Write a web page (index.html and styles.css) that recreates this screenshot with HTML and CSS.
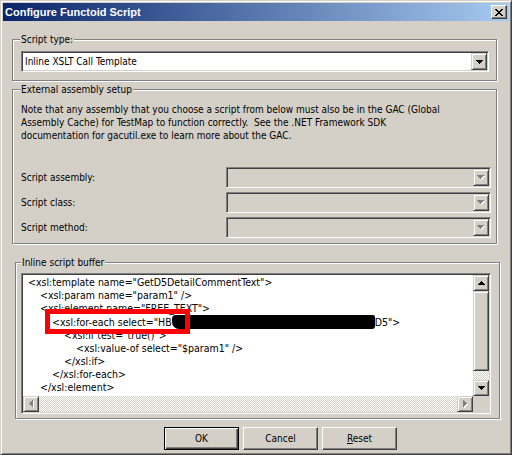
FILE: index.html
```html
<!DOCTYPE html>
<html lang="en">
<head>
  <meta charset="UTF-8" />
  <title>Configure Functoid Script</title>
  <link rel="stylesheet" href="styles.css">
</head>
<body>
  <div class="window">
    <div class="titlebar">
      <span class="title">Configure Functoid Script</span>
      <button class="close" aria-label="Close">
        <svg width="8" height="7" viewBox="0 0 8 7" shape-rendering="crispEdges"><path d="M0 0h2v1H0zM6 0h2v1H6zM1 1h2v1H1zM5 1h2v1H5zM2 2h4v1H2zM3 3h2v1H3zM2 4h4v1H2zM1 5h2v1H1zM5 5h2v1H5zM0 6h2v1H0zM6 6h2v1H6z"/></svg>
      </button>
    </div>

    <div class="client">
      <fieldset class="group group-type">
        <legend>Script type:</legend>
        <div class="combo">
          <span class="combo-text">Inline XSLT Call Template</span>
          <span class="sbtn combo-btn">
            <svg width="7" height="4" viewBox="0 0 7 4" shape-rendering="crispEdges"><path d="M0 0h7v1H0zM1 1h5v1H1zM2 2h3v1H2zM3 3h1v1H3z"/></svg>
          </span>
        </div>
      </fieldset>

      <fieldset class="group group-assembly">
        <legend>External assembly setup</legend>
        <p class="note">Note that any assembly that you choose a script from below must also be in the GAC (Global<br>Assembly Cache) for TestMap to function correctly.&nbsp; See the .NET Framework SDK<br>documentation for gacutil.exe to learn more about the GAC.</p>
        <div class="fields">
          <div class="field-row">
            <label>Script assembly:</label>
            <div class="combo is-disabled">
              <span class="combo-text"></span>
              <span class="sbtn combo-btn">
                <svg width="8" height="5" viewBox="0 0 8 5" shape-rendering="crispEdges"><path fill="#fff" transform="translate(1 1)" d="M0 0h7v1H0zM1 1h5v1H1zM2 2h3v1H2zM3 3h1v1H3z"/><path fill="#808080" d="M0 0h7v1H0zM1 1h5v1H1zM2 2h3v1H2zM3 3h1v1H3z"/></svg>
              </span>
            </div>
          </div>
          <div class="field-row">
            <label>Script class:</label>
            <div class="combo is-disabled">
              <span class="combo-text"></span>
              <span class="sbtn combo-btn">
                <svg width="8" height="5" viewBox="0 0 8 5" shape-rendering="crispEdges"><path fill="#fff" transform="translate(1 1)" d="M0 0h7v1H0zM1 1h5v1H1zM2 2h3v1H2zM3 3h1v1H3z"/><path fill="#808080" d="M0 0h7v1H0zM1 1h5v1H1zM2 2h3v1H2zM3 3h1v1H3z"/></svg>
              </span>
            </div>
          </div>
          <div class="field-row">
            <label>Script method:</label>
            <div class="combo is-disabled">
              <span class="combo-text"></span>
              <span class="sbtn combo-btn">
                <svg width="8" height="5" viewBox="0 0 8 5" shape-rendering="crispEdges"><path fill="#fff" transform="translate(1 1)" d="M0 0h7v1H0zM1 1h5v1H1zM2 2h3v1H2zM3 3h1v1H3z"/><path fill="#808080" d="M0 0h7v1H0zM1 1h5v1H1zM2 2h3v1H2zM3 3h1v1H3z"/></svg>
              </span>
            </div>
          </div>
        </div>
      </fieldset>

      <fieldset class="group group-buffer">
        <legend>Inline script buffer</legend>
        <div class="editor">
          <div class="code">
            <div class="line">&lt;xsl:template name="GetD5DetailCommentText"&gt;</div>
            <div class="line in-1">&lt;xsl:param name="param1" /&gt;</div>
            <div class="line in-1">&lt;xsl:element name="FREE_TEXT"&gt;</div>
            <div class="line in-2">&lt;xsl:for-each select="HB<span class="redacted"></span>D5"&gt;</div>
            <div class="line in-3">&lt;xsl:if test="true()"&gt;</div>
            <div class="line in-4">&lt;xsl:value-of select="$param1" /&gt;</div>
            <div class="line in-3">&lt;/xsl:if&gt;</div>
            <div class="line in-2">&lt;/xsl:for-each&gt;</div>
            <div class="line in-1">&lt;/xsl:element&gt;</div>
            <div class="highlight"></div>
          </div>
          <div class="vscroll">
            <span class="sbtn">
              <svg width="7" height="4" viewBox="0 0 7 4" shape-rendering="crispEdges"><path d="M3 0h1v1H3zM2 1h3v1H2zM1 2h5v1H1zM0 3h7v1H0z"/></svg>
            </span>
            <span class="sbtn thumb"></span>
            <span class="track"></span>
            <span class="sbtn">
              <svg width="7" height="4" viewBox="0 0 7 4" shape-rendering="crispEdges"><path d="M0 0h7v1H0zM1 1h5v1H1zM2 2h3v1H2zM3 3h1v1H3z"/></svg>
            </span>
          </div>
          <div class="hscroll">
            <span class="sbtn">
              <svg width="5" height="8" viewBox="0 0 5 8" shape-rendering="crispEdges"><path fill="#fff" transform="translate(1 1)" d="M3 0h1v7H3zM2 1h1v5H2zM1 2h1v3H1zM0 3h1v1H0z"/><path fill="#808080" d="M3 0h1v7H3zM2 1h1v5H2zM1 2h1v3H1zM0 3h1v1H0z"/></svg>
            </span>
            <span class="track"></span>
            <span class="sbtn">
              <svg width="5" height="8" viewBox="0 0 5 8" shape-rendering="crispEdges"><path fill="#fff" transform="translate(1 1)" d="M0 0h1v7H0zM1 1h1v5H1zM2 2h1v3H2zM3 3h1v1H3z"/><path fill="#808080" d="M0 0h1v7H0zM1 1h1v5H1zM2 2h1v3H2zM3 3h1v1H3z"/></svg>
            </span>
          </div>
          <div class="corner"></div>
        </div>
      </fieldset>

      <div class="buttons">
        <button class="btn is-default">OK</button>
        <button class="btn">Cancel</button>
        <button class="btn"><u>R</u>eset</button>
      </div>
    </div>
  </div>
</body>
</html>
```

FILE: styles.css
```css
:root {
  --face: #d4d0c8;
  --shadow: #808080;
  --dark: #404040;
  --light: #fff;
}

* {
  box-sizing: border-box;
}

body {
  margin: 0;
  background: var(--face);
  font-family: "DejaVu Sans Condensed", "DejaVu Sans", "Liberation Sans", sans-serif;
  font-stretch: condensed;
  font-size: 10px;
  color: #000;
}

.window {
  width: 512px;
  height: 455px;
  overflow: hidden;
  display: flex;
  flex-direction: column;
  padding: 2px;
  background: var(--face);
  border: 1px solid;
  border-color: var(--face) var(--dark) var(--dark) var(--face);
  box-shadow: inset 1px 1px var(--light), inset -1px -1px var(--shadow);
}

/* Title bar */
.titlebar {
  height: 18px;
  display: flex;
  align-items: center;
  justify-content: space-between;
  padding: 0 2px;
  background: linear-gradient(to right, #0a246a, #a6caf0);
}

.title {
  color: #fff;
  font-family: "Liberation Sans", Arial, sans-serif;
  font-stretch: normal;
  font-size: 11px;
  font-weight: bold;
  line-height: 13px;
}

.close {
  width: 16px;
  height: 14px;
  padding: 0;
  display: flex;
  align-items: center;
  justify-content: center;
  background: var(--face);
  border: 1px solid;
  border-color: var(--light) var(--dark) var(--dark) var(--light);
  box-shadow: inset -1px -1px var(--shadow);
}

.client {
  flex: 1;
}

/* Group boxes */
.group {
  width: 485px;
  min-width: 0;
  border: 1px solid var(--shadow);
  box-shadow: inset 1px 1px var(--light), 1px 1px var(--light);
}

.group legend {
  padding: 0 1px;
  margin-left: -1px;
  line-height: 13px;
  background: var(--face);
}

.group-type {
  margin: 12px 0 0 9px;
  padding: 5px 7px 8px 8px;
}

.group-assembly {
  margin: 2px 0 0 9px;
  padding: 7px 5px 5px 8px;
}

.group-buffer {
  margin: 12px 0 0 12px;
  padding: 4px 8px 4px 5px;
}

.group-buffer legend {
  margin-left: 0;
}

.note {
  margin: 0;
  line-height: 13px;
  white-space: nowrap;
}

.fields {
  margin-top: 25px;
  display: flex;
  flex-direction: column;
  gap: 4px;
}

.field-row {
  height: 21px;
  display: flex;
  align-items: center;
  justify-content: space-between;
}

.field-row .combo {
  width: 265px;
}

/* Combo boxes */
.combo {
  height: 21px;
  display: flex;
  padding: 1px;
  background: #fff;
  border: 1px solid;
  border-color: var(--shadow) var(--light) var(--light) var(--shadow);
  box-shadow: inset 1px 1px var(--dark), inset -1px -1px var(--face);
}

.combo.is-disabled {
  background: var(--face);
}

.combo-text {
  flex: 1;
  padding-left: 2px;
  line-height: 17px;
}

/* Raised scroll-style buttons */
.sbtn {
  width: 16px;
  height: 16px;
  flex: none;
  display: flex;
  align-items: center;
  justify-content: center;
  background: var(--face);
  border: 1px solid;
  border-color: var(--face) var(--dark) var(--dark) var(--face);
  box-shadow: inset 1px 1px var(--light), inset -1px -1px var(--shadow);
}

.combo-btn {
  height: 17px;
}

/* Script editor */
.editor {
  width: 470px;
  height: 141px;
  padding: 1px;
  display: grid;
  grid-template-columns: 1fr 16px;
  grid-template-rows: 1fr 16px;
  background: #fff;
  border: 1px solid;
  border-color: var(--shadow) var(--light) var(--light) var(--shadow);
  box-shadow: inset 1px 1px var(--dark), inset -1px -1px var(--face);
}

.code {
  position: relative;
  overflow: hidden;
  padding: 1px 0 0 5px;
  font-size: 10.5px;
  line-height: 13px;
  background: #fff;
}

.line {
  white-space: pre;
}

.line.in-1 { padding-left: 12px; }
.line.in-2 { padding-left: 24px; }
.line.in-3 { padding-left: 36px; }
.line.in-4 { padding-left: 48px; }

.redacted {
  display: inline-block;
  width: 203px;
  height: 14px;
  vertical-align: -3px;
  background: #000;
  border-radius: 4px 2px 3px 7px;
}

.highlight {
  position: absolute;
  left: 22px;
  top: 34px;
  width: 145px;
  height: 25px;
  border: 5px solid #f00;
}

.vscroll {
  display: flex;
  flex-direction: column;
}

.vscroll .thumb {
  height: 80px;
}

.hscroll {
  display: flex;
}

.track {
  flex: 1;
  background: repeating-conic-gradient(#fff 0 25%, var(--face) 0 50%) 0 0 / 2px 2px;
}

.corner {
  background: var(--face);
}

/* Dialog buttons */
.buttons {
  margin-top: 8px;
  padding-left: 161px;
  display: flex;
  gap: 4px;
}

.btn {
  width: 75px;
  height: 23px;
  padding: 0;
  font: inherit;
  color: #000;
  background: var(--face);
  border: 1px solid;
  border-color: var(--light) var(--dark) var(--dark) var(--light);
  box-shadow: inset -1px -1px var(--shadow);
}

.btn.is-default {
  border-color: #000;
  box-shadow: inset 1px 1px var(--light), inset -1px -1px var(--dark), inset -2px -2px var(--shadow);
}
```
